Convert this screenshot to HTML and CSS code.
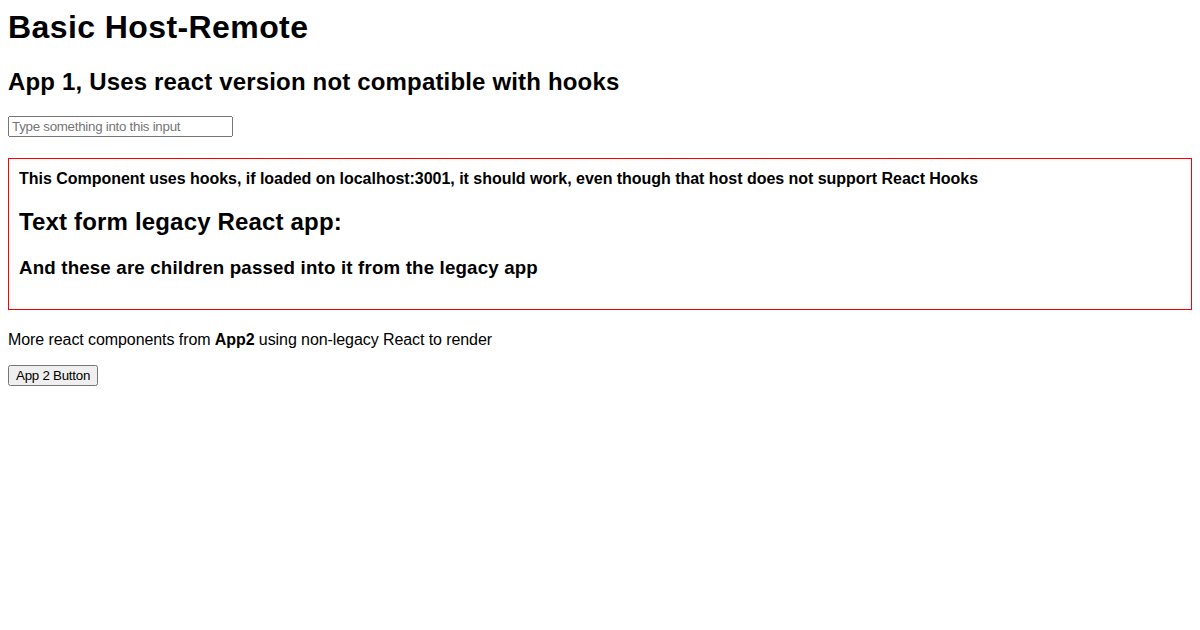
FILE: index.html
```html
<!DOCTYPE html>
<html lang="en">
<head>
    <meta charset="UTF-8">
    <meta name="viewport" content="width=device-width, initial-scale=1.0">
    <title>Basic Host-Remote</title>
    <link rel="stylesheet" href="styles.css">
</head>
<body>
    <div id="root">
        <h1>Basic Host-Remote</h1>
        <h2 class="app1-title">App 1, Uses react version not compatible with hooks</h2>
        <input type="text" class="app1-input" placeholder="Type something into this input">
        <div class="legacy-box">
            <b class="legacy-note">This Component uses hooks, if loaded on localhost:3001, it should work, even though that host does not support React Hooks</b>
            <h2>Text form legacy React app:</h2>
            <h3>And these are children passed into it from the legacy app</h3>
        </div>
        <p>More react components from <b>App2</b> using non-legacy React to render</p>
        <button class="app2-button">App 2 Button</button>
    </div>
</body>
</html>
```

FILE: styles.css
```css
body {
    font-family: "Liberation Sans", Arial, sans-serif;
    margin: 8px;
    line-height: 1.2;
    letter-spacing: -0.08px;
    background: white;
    color: black;
}
h1 {
    margin-top: 0;
    margin-bottom: 22px;
    letter-spacing: 0.41px;
}
h2, h3 {
    letter-spacing: 0.17px;
}
.app1-title {
    margin-bottom: 18px;
}
.app1-input {
    font-family: "Liberation Sans", Arial, sans-serif;
    box-sizing: border-box;
    width: 225px;
    margin-top: 1px;
    letter-spacing: -0.27px;
}
.legacy-box {
    border: 1px solid red;
    padding: 10px 10px 11px;
    margin-top: 21px;
    margin-bottom: 19.5px;
}
.legacy-note {
    letter-spacing: -0.03px;
}
.app2-button {
    font-family: "Liberation Sans", Arial, sans-serif;
    letter-spacing: -0.25px;
}
```
